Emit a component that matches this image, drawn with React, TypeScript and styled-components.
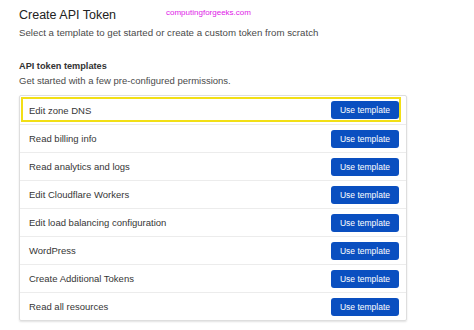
import React from "react";
import styled, { createGlobalStyle } from "styled-components";

const GlobalStyle = createGlobalStyle`
  html, body {
    margin: 0;
    padding: 0;
    background: #ffffff;
  }
  body {
    font-family: "Liberation Sans", Arial, sans-serif;
    color: #313131;
    -webkit-font-smoothing: antialiased;
  }
`;

const Page = styled.div`
  width: 474px;
  height: 330px;
  padding: 7px 0 0 19px;
  box-sizing: border-box;
  overflow: hidden;
`;

const TitleRow = styled.div`
  display: flex;
  align-items: flex-start;
  height: 16px;
`;

const Title = styled.h1`
  margin: 0;
  font-size: 12.5px;
  line-height: 16px;
  font-weight: 400;
  color: #222;
  width: 147px;
`;

const Watermark = styled.span`
  font-size: 8px;
  line-height: 12px;
  color: #e020e8;
`;

const Subtitle = styled.p`
  margin: 3px 0 0;
  font-size: 9.7px;
  line-height: 14px;
  color: #4a4a4a;
`;

const SectionTitle = styled.h2`
  margin: 19px 0 0;
  font-size: 9.2px;
  line-height: 14px;
  font-weight: 700;
  color: #333;
`;

const SectionText = styled.p`
  margin: 1px 0 0;
  font-size: 9.5px;
  line-height: 14px;
  color: #4a4a4a;
`;

const Card = styled.ul`
  list-style: none;
  margin: 7px 0 0;
  padding: 0;
  width: 388px;
  border: 1px solid #dedede;
  border-radius: 2px;
  box-shadow: 0 1px 2px rgba(0, 0, 0, 0.12);
  box-sizing: border-box;
`;

const Row = styled.li<{ $highlight?: boolean }>`
  position: relative;
  display: flex;
  align-items: center;
  justify-content: space-between;
  height: 28px;
  padding: 0 7px 0 9px;
  box-sizing: border-box;
  border-top: 1px solid ${({ $highlight }) => ($highlight ? "transparent" : "#ececec")};
  &:first-child {
    border-top: none;
  }
  ${({ $highlight }) =>
    $highlight &&
    `
    &::after {
      content: "";
      position: absolute;
      left: 1px;
      right: 5px;
      top: 1px;
      bottom: 2px;
      border: 2px solid #f2df16;
      pointer-events: none;
    }
  `}
`;

const RowLabel = styled.span`
  font-size: 9.5px;
  color: #363636;
`;

const UseButton = styled.button`
  width: 68px;
  height: 18px;
  border: none;
  border-radius: 3px;
  background: #0a4fc0;
  color: #fff;
  font-family: "Liberation Sans", Arial, sans-serif;
  font-size: 8.5px;
  font-weight: 400;
  padding: 0;
  cursor: pointer;
`;

const templates = [
  "Edit zone DNS",
  "Read billing info",
  "Read analytics and logs",
  "Edit Cloudflare Workers",
  "Edit load balancing configuration",
  "WordPress",
  "Create Additional Tokens",
  "Read all resources",
];

export default function App() {
  return (
    <>
      <GlobalStyle />
      <Page>
        <TitleRow>
          <Title>Create API Token</Title>
          <Watermark>computingforgeeks.com</Watermark>
        </TitleRow>
        <Subtitle>Select a template to get started or create a custom token from scratch</Subtitle>
        <SectionTitle>API token templates</SectionTitle>
        <SectionText>Get started with a few pre-configured permissions.</SectionText>
        <Card>
          {templates.map((name, i) => (
            <Row key={name} $highlight={i === 0}>
              <RowLabel>{name}</RowLabel>
              <UseButton>Use template</UseButton>
            </Row>
          ))}
        </Card>
      </Page>
    </>
  );
}
